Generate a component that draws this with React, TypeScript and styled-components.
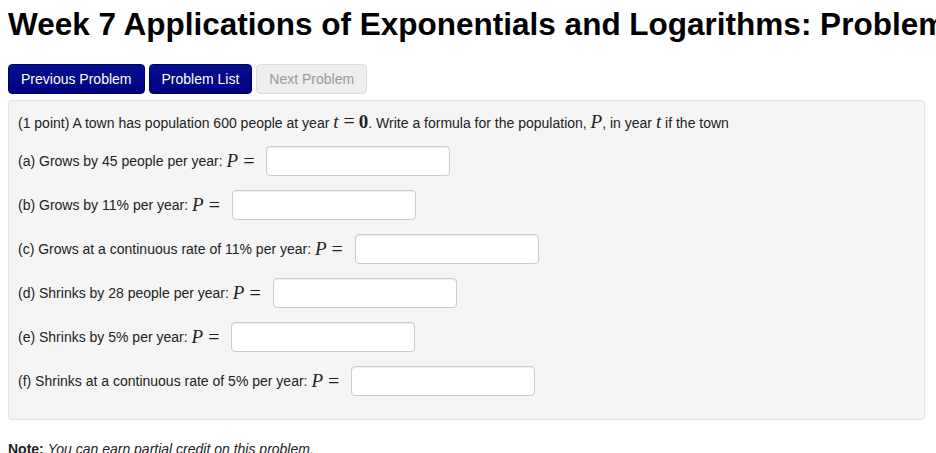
import styled, { createGlobalStyle } from 'styled-components';

const GlobalStyle = createGlobalStyle`
  html, body {
    margin: 0;
    padding: 0;
    background: #ffffff;
    overflow: hidden;
  }
  body {
    font-family: "Liberation Sans", Arial, sans-serif;
    color: #222;
  }
`;

const Page = styled.div`
  width: 936px;
  height: 453px;
  overflow: hidden;
  padding: 0 11px 0 8px;
  box-sizing: border-box;
`;

const Title = styled.h1`
  margin: 0;
  padding-top: 6px;
  font-size: 31.5px;
  line-height: 37px;
  font-weight: bold;
  color: #000;
  white-space: nowrap;
`;

const Nav = styled.div`
  display: flex;
  gap: 4px;
  margin-top: 21px;
`;

const NavButton = styled.button<{ $disabled?: boolean }>`
  height: 30px;
  padding: 0 12px;
  font-family: "Liberation Sans", Arial, sans-serif;
  font-size: 14px;
  border-radius: 4px;
  cursor: ${(p) => (p.$disabled ? 'default' : 'pointer')};
  color: ${(p) => (p.$disabled ? '#999' : '#fff')};
  background: ${(p) =>
    p.$disabled ? '#eeeeee' : 'linear-gradient(#06108f, #000080)'};
  border: 1px solid ${(p) => (p.$disabled ? '#dcdcdc' : '#00006a')};
`;

const Well = styled.div`
  display: flex;
  flex-direction: column;
  gap: 14px;
  margin-top: 6px;
  background: #f5f5f5;
  border: 1px solid #e3e3e3;
  border-radius: 4px;
  padding: 10px 9px 23px;
  font-size: 14px;
  color: #222;
`;

const Intro = styled.p`
  margin: 0 0 -1px;
  line-height: 20px;
`;

const Row = styled.div`
  display: flex;
  align-items: center;
  height: 30px;
`;

const Num = styled.span`
  font-family: "Liberation Serif", "DejaVu Serif", serif;
  font-size: 19px;
  font-weight: bold;
`;

const MathVar = styled.i`
  font-family: "Liberation Serif", "DejaVu Serif", serif;
  font-size: 19px;
  font-style: italic;
  font-weight: 500;
`;

const Eq = styled.span<{ $end?: number }>`
  font-family: "Liberation Serif", serif;
  font-size: 20px;
  margin: 0 ${(p) => p.$end ?? 5}px 0 5px;
`;

const Answer = styled.input`
  width: 184px;
  height: 30px;
  box-sizing: border-box;
  margin-left: 6px;
  border: 1px solid #cccccc;
  border-radius: 4px;
  background: #fff;
  box-shadow: inset 0 1px 1px rgba(0, 0, 0, 0.075);
`;

const Note = styled.p`
  margin: 21px 0 0;
  font-size: 14px;
  color: #222;
  white-space: nowrap;
`;

const parts = [
  '(a) Grows by 45 people per year:',
  '(b) Grows by 11% per year:',
  '(c) Grows at a continuous rate of 11% per year:',
  '(d) Shrinks by 28 people per year:',
  '(e) Shrinks by 5% per year:',
  '(f) Shrinks at a continuous rate of 5% per year:',
];

export default function App() {
  return (
    <Page>
      <GlobalStyle />
      <Title>Week 7 Applications of Exponentials and Logarithms: Problem 1</Title>
      <Nav>
        <NavButton>Previous Problem</NavButton>
        <NavButton>Problem List</NavButton>
        <NavButton $disabled>Next Problem</NavButton>
      </Nav>
      <Well>
        <Intro>
          (1 point) A town has population 600 people at year <MathVar>t</MathVar>
          <Eq $end={4}>=</Eq>
          <Num>0</Num>. Write a formula for the population, <MathVar>P</MathVar>, in
          year <MathVar>t</MathVar> if the town
        </Intro>
        {parts.map((label) => (
          <Row key={label}>
            {label}&nbsp;<MathVar>P</MathVar>
            <Eq $end={6}>=</Eq>
            <Answer type="text" />
          </Row>
        ))}
      </Well>
      <Note>
        <b>Note:</b> <i>You can earn partial credit on this problem.</i>
      </Note>
    </Page>
  );
}
